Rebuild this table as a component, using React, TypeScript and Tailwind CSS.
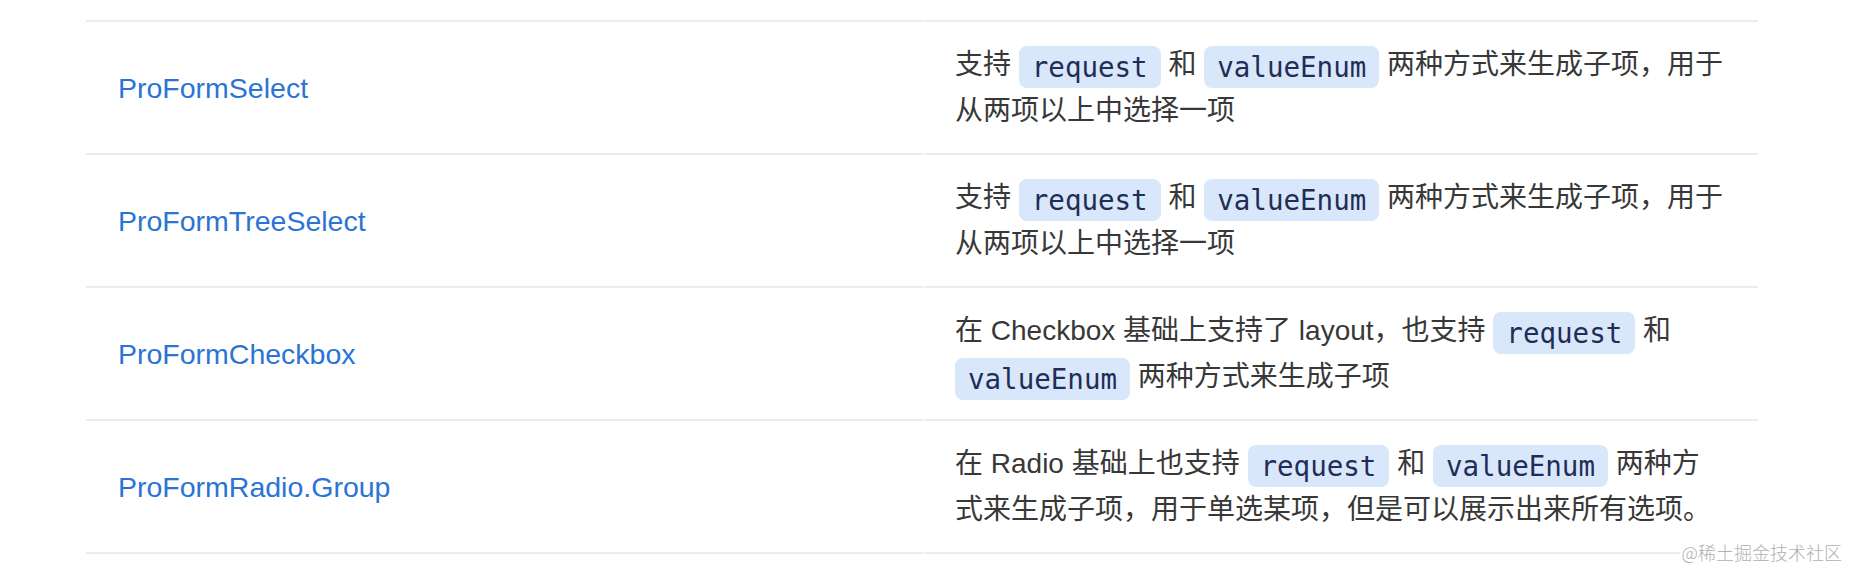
import React from "react";

type Part = string | { code: string };

const rows: { name: string; lines: Part[][] }[] = [
  {
    name: "ProFormSelect",
    lines: [
      ["支持 ", { code: "request" }, " 和 ", { code: "valueEnum" }, " 两种方式来生成子项，用于"],
      ["从两项以上中选择一项"],
    ],
  },
  {
    name: "ProFormTreeSelect",
    lines: [
      ["支持 ", { code: "request" }, " 和 ", { code: "valueEnum" }, " 两种方式来生成子项，用于"],
      ["从两项以上中选择一项"],
    ],
  },
  {
    name: "ProFormCheckbox",
    lines: [
      ["在 Checkbox 基础上支持了 layout，也支持 ", { code: "request" }, " 和"],
      [{ code: "valueEnum" }, " 两种方式来生成子项"],
    ],
  },
  {
    name: "ProFormRadio.Group",
    lines: [
      ["在 Radio 基础上也支持 ", { code: "request" }, " 和 ", { code: "valueEnum" }, " 两种方"],
      ["式来生成子项，用于单选某项，但是可以展示出来所有选项。"],
    ],
  },
];

function Code({ children }: { children: string }) {
  return (
    <code className="inline-block h-[42px] px-[13px] rounded-[8px] bg-[#d9e7fa] text-[#1f2d57] text-[27.5px] leading-[42px] align-middle font-['DejaVu_Sans_Mono',monospace]">
      {children}
    </code>
  );
}

export default function App() {
  return (
    <div className="relative w-[1850px] h-[568px] bg-white font-['Liberation_Sans','Noto_Sans_CJK_SC',sans-serif] text-[28px] text-[#383838]">
      <div className="pt-[20px] pl-[86px]">
        <div className="w-[1672px]">
          {rows.map((row, i) => (
            <div key={row.name} className="grid grid-cols-[837px_1fr] gap-x-[1px]">
              <div
                className={
                  "flex items-center pl-[32px] border-t-2 border-[#ececec] " +
                  (i === rows.length - 1 ? "border-b-2" : "")
                }
              >
                <a href="#" className="text-[#2b74d4] text-[28.5px] leading-[46px]">
                  {row.name}
                </a>
              </div>
              <div
                className={
                  "pl-[31px] pt-[20px] pb-[19px] leading-[46px] border-t-2 border-[#ececec] " +
                  (i === rows.length - 1 ? "border-b-2" : "")
                }
              >
                {row.lines.map((line, j) => (
                  <div key={j} className="whitespace-pre">
                    {line.map((p, k) =>
                      typeof p === "string" ? <span key={k}>{p}</span> : <Code key={k}>{p.code}</Code>
                    )}
                  </div>
                ))}
              </div>
            </div>
          ))}
        </div>
      </div>
      <div className="absolute right-[8px] top-[540px] bg-white pl-[2px] text-[18px] leading-[24px] text-[#b0b0b0] font-['Noto_Sans_CJK_SC',sans-serif] font-light">
        @稀土掘金技术社区
      </div>
    </div>
  );
}
